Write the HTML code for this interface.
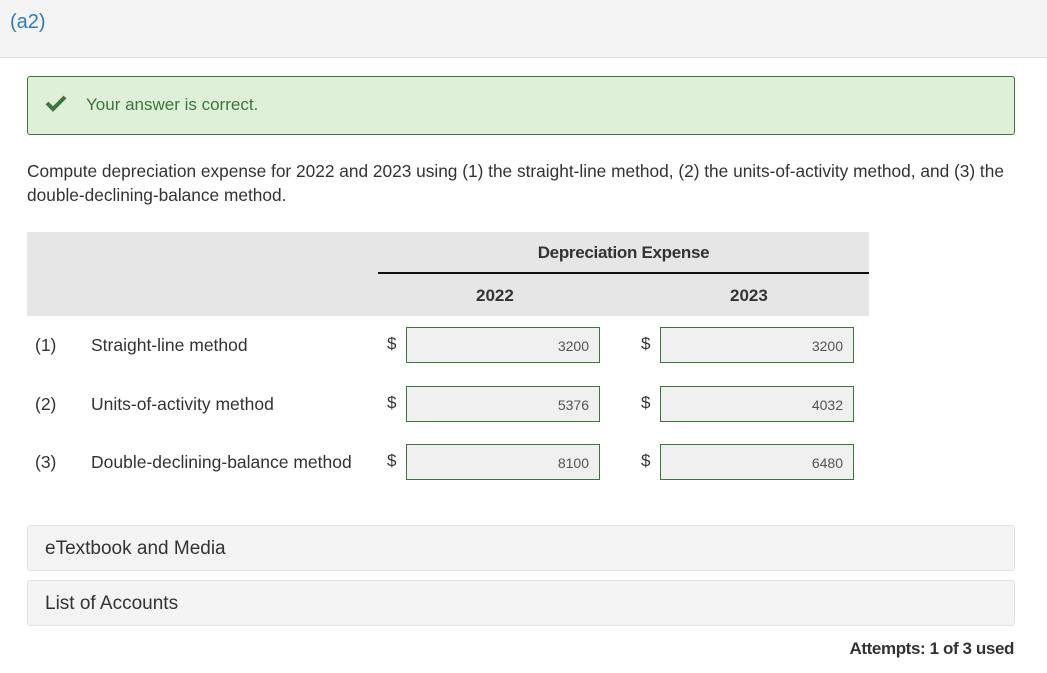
<!DOCTYPE html>
<html><head><meta charset="utf-8"><style>
*{margin:0;padding:0;box-sizing:border-box}
body{width:1047px;height:673px;background:#fff;font-family:"Liberation Sans",sans-serif;color:#333;position:relative;overflow:hidden}
.a{position:absolute;white-space:nowrap}
.top{position:absolute;left:0;top:0;width:1047px;height:58px;background:#f4f4f4;border-bottom:1px solid #ddd}
.ok{position:absolute;left:27px;top:76px;width:988px;height:59px;background:#dff0d8;border:1px solid #3c763d;border-radius:3px}
.hd{position:absolute;background:#e6e6e6}
.in{position:absolute;width:194px;height:36px;background:#f0f0f0;border:1px solid #3c763d;font-size:14px;color:#555;text-align:right;padding:10px 10px 0 0}
.box{position:absolute;left:27px;width:988px;height:46px;background:#f4f4f4;border:1px solid #e2e2e2;border-radius:3px;font-size:19px;color:#333;padding:12px 0 0 17px}
.l{font-size:17.5px}
</style></head><body>
<div class="top"></div>
<div class="a" style="left:10px;top:11px;font-size:20px;color:#2d7dbf">(a2)</div>
<div class="ok"></div>
<svg class="a" style="left:45px;top:94px" width="22" height="18" viewBox="0 0 22 18"><path d="M2 9 L8 15 L20 3" fill="none" stroke="#3c763d" stroke-width="4"/></svg>
<div class="a" style="left:86px;top:95px;font-size:17px;color:#3c763d">Your answer is correct.</div>
<div class="a" style="left:27px;top:161px;font-size:17.3px">Compute depreciation expense for 2022 and 2023 using (1) the straight-line method, (2) the units-of-activity method, and (3) the</div>
<div class="a" style="left:27px;top:185px;font-size:17.3px">double-declining-balance method.</div>
<div class="hd" style="left:27px;top:232px;width:842px;height:84px"></div>
<div style="position:absolute;left:378px;top:272px;width:491px;height:2px;background:#111"></div>
<div class="a" style="left:378px;width:491px;text-align:center;top:243px;font-size:17px;font-weight:bold;letter-spacing:-0.3px">Depreciation Expense</div>
<div class="a" style="left:476px;top:286px;font-size:17px;font-weight:bold">2022</div>
<div class="a" style="left:730px;top:286px;font-size:17px;font-weight:bold">2023</div>

<div class="a l" style="left:35px;top:335px">(1)</div>
<div class="a l" style="left:91px;top:335px">Straight-line method</div>
<div class="a l" style="left:35px;top:394px">(2)</div>
<div class="a l" style="left:91px;top:394px">Units-of-activity method</div>
<div class="a l" style="left:35px;top:452px">(3)</div>
<div class="a l" style="left:91px;top:452px">Double-declining-balance method</div>

<div class="a" style="left:387px;top:334px;font-size:17px">$</div>
<div class="a" style="left:641px;top:334px;font-size:17px">$</div>
<div class="a" style="left:387px;top:393px;font-size:17px">$</div>
<div class="a" style="left:641px;top:393px;font-size:17px">$</div>
<div class="a" style="left:387px;top:451px;font-size:17px">$</div>
<div class="a" style="left:641px;top:451px;font-size:17px">$</div>

<div class="in" style="left:406px;top:327px">3200</div>
<div class="in" style="left:660px;top:327px">3200</div>
<div class="in" style="left:406px;top:386px">5376</div>
<div class="in" style="left:660px;top:386px">4032</div>
<div class="in" style="left:406px;top:444px">8100</div>
<div class="in" style="left:660px;top:444px">6480</div>

<div class="box" style="top:525px">eTextbook and Media</div>
<div class="box" style="top:580px">List of Accounts</div>
<div class="a" style="right:33px;top:639px;font-size:17px;font-weight:bold;letter-spacing:-0.4px">Attempts: 1 of 3 used</div>
</body></html>
